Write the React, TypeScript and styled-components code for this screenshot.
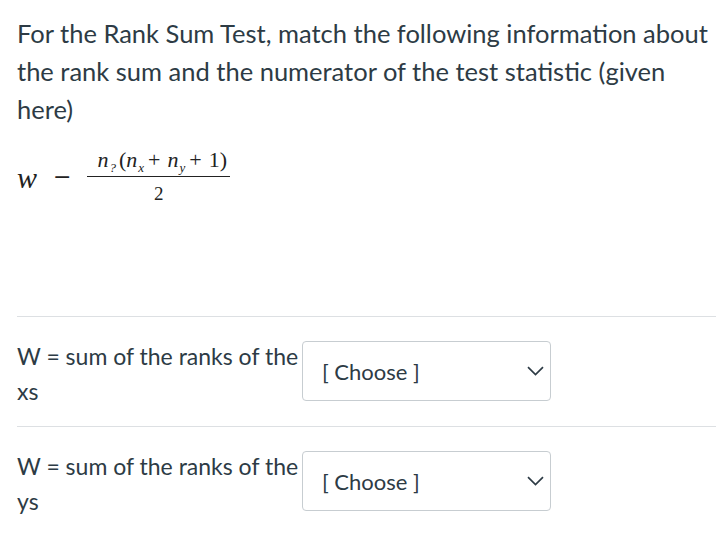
import styled, { createGlobalStyle } from "styled-components";

const GlobalStyle = createGlobalStyle`
  body {
    margin: 0;
    background: #fff;
    font-family: Lato, "Liberation Sans", sans-serif;
    color: #2d3b45;
  }
`;

const Page = styled.div`
  padding: 14px 0 0 17px;
`;

const Question = styled.p`
  margin: 0;
  font-size: 25.5px;
  line-height: 38px;
  padding-right: 4px;
`;

const MathLine = styled.div`
  display: flex;
  align-items: center;
  margin: 20px 0 0 0;
  font-family: "Liberation Serif", "DejaVu Serif", serif;
  color: #222;
  height: 56px;
`;

const Var = styled.i`
  font-style: italic;
`;

const BigVar = styled.i`
  font-style: italic;
  font-size: 30px;
  margin-top: 4px;
`;

const Minus = styled.span`
  font-family: "DejaVu Serif", serif;
  font-size: 22px;
  margin: 0 16px 0 16px;
`;

const Frac = styled.span`
  display: inline-flex;
  flex-direction: column;
  align-items: center;
`;

const Num = styled.span`
  font-size: 22px;
  padding: 0 3px 3px 10px;
  border-bottom: 1.5px solid #222;
  white-space: nowrap;
`;

const Den = styled.span`
  padding-top: 6px;
  font-size: 19px;
`;

const Sub = styled.sub<{ $gap?: number }>`
  font-size: 13px;
  font-style: italic;
  vertical-align: -5px;
  line-height: 0;
  margin: 0 ${(p) => p.$gap ?? 1}px 0 1px;
`;

const Op = styled.span`
  margin: 0 7px 0 3px;
`;

const Rows = styled.div`
  margin-top: 112px;
`;

const Row = styled.div`
  display: flex;
  align-items: flex-start;
  border-top: 1px solid #dde0e3;
  padding: 24px 0 17px;
`;

const Label = styled.div`
  width: 285px;
  font-size: 23px;
  line-height: 35px;
  margin-top: -2px;
`;

const Select = styled.div`
  box-sizing: border-box;
  width: 249px;
  height: 60px;
  border: 1px solid #c7cdd1;
  border-radius: 4px;
  display: flex;
  align-items: center;
  justify-content: space-between;
  padding: 0 6px 0 19px;
  font-size: 22px;
  color: #2d3b45;
`;

const Chevron = () => (
  <svg width="17" height="10" viewBox="0 0 17 10" fill="none">
    <path d="M1 1.2 L8.5 8.5 L16 1.2" stroke="#2d3b45" strokeWidth="1.7" />
  </svg>
);

const items = ["xs", "ys"];

export default function App() {
  return (
    <Page>
      <GlobalStyle />
      <Question>
        For the Rank Sum Test, match the following information about the rank
        sum and the numerator of the test statistic (given here)
      </Question>
      <MathLine>
        <BigVar>w</BigVar>
        <Minus>−</Minus>
        <Frac>
          <Num>
            <Var>n</Var>
            <Sub $gap={3}>?</Sub>(<Var>n</Var>
            <Sub>x</Sub>
            <Op>+</Op>
            <Var>n</Var>
            <Sub>y</Sub>
            <Op>+</Op>1)
          </Num>
          <Den>2</Den>
        </Frac>
      </MathLine>
      <Rows>
        {items.map((it) => (
          <Row key={it}>
            <Label>W = sum of the ranks of the {it}</Label>
            <Select>
              <span>[ Choose ]</span>
              <Chevron />
            </Select>
          </Row>
        ))}
      </Rows>
    </Page>
  );
}
